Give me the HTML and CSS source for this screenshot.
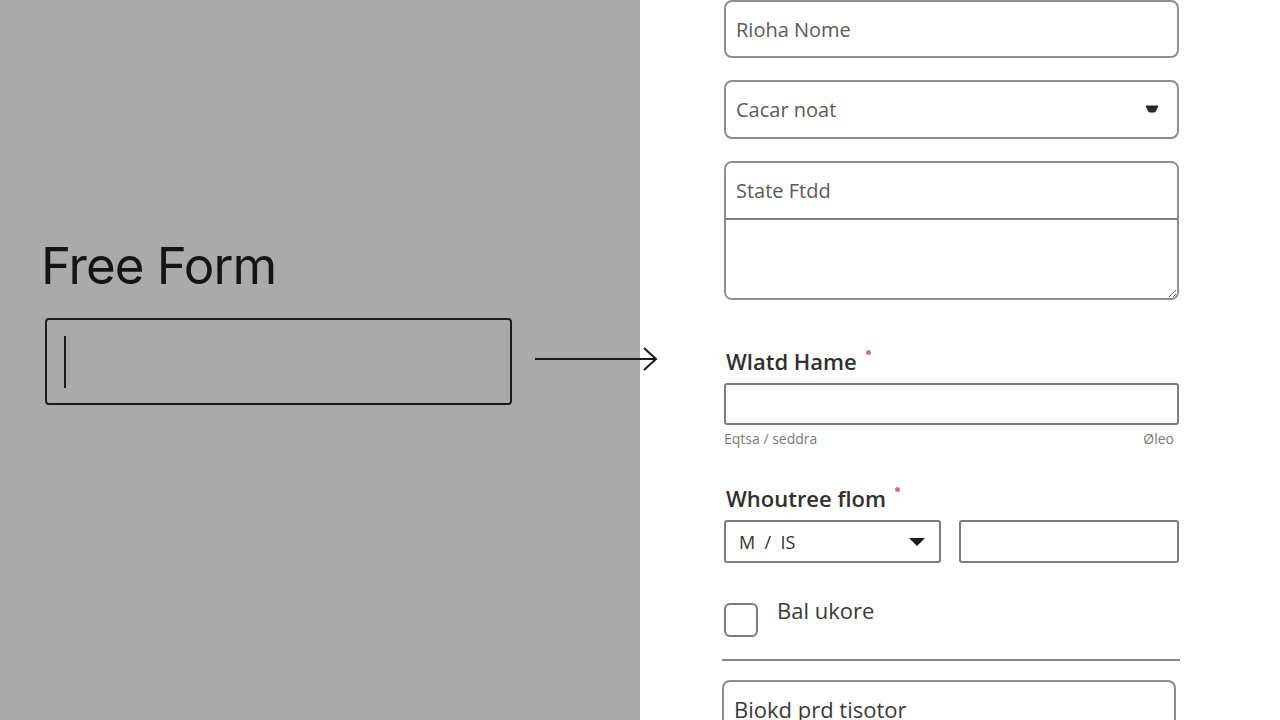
FILE: index.html
```html
<html>
<head>
  <title>Free Form</title>
  <link rel="stylesheet" href="styles.css">
</head>
<body>
  <div class="page">

    <!-- left: the one big free-form input -->
    <div class="side">
      <h1 class="side-title">Free Form</h1>
      <div class="side-row">
        <div class="big-input"><span class="caret"></span></div>
        <svg class="arrow" width="124" height="30" viewBox="0 0 124 30">
          <path d="M0 15 H121 M109 4 L121 15 L109 26" fill="none" stroke="#1a1a1a" stroke-width="2"/>
        </svg>
      </div>
    </div>

    <!-- right: the structured form it turns into -->
    <div class="main">
      <div class="form">
        <input class="field" type="text" placeholder="Rioha Nome">

        <div class="field select">
          <span class="ph">Cacar noat</span>
          <svg width="14" height="9" viewBox="0 0 14 9"><path d="M1 1 H13 L10 7 H4 Z" fill="#2a2a2a" stroke="#2a2a2a" stroke-linejoin="round"/></svg>
        </div>

        <div class="area-box">
          <input class="area-head" type="text" placeholder="State Ftdd">
          <textarea class="area-body"></textarea>
        </div>

        <label class="lbl lbl-first">Wlatd Hame<span class="req"></span></label>
        <input class="field small" type="text">
        <div class="hint">
          <span>Eqtsa / seddra</span>
          <span>Øleo</span>
        </div>

        <label class="lbl lbl-second">Whoutree flom<span class="req"></span></label>
        <div class="pair">
          <div class="field small select date">
            <span class="ph dark">M &nbsp;/ &nbsp;IS</span>
            <svg width="18" height="10" viewBox="0 0 18 10"><path d="M1 1 H17 L9 9 Z" fill="#1a1a1a"/></svg>
          </div>
          <input class="field small" type="text">
        </div>

        <div class="check-row">
          <span class="check"></span>
          <span class="check-text">Bal ukore</span>
        </div>

        <hr class="rule">

        <input class="field last" type="text" placeholder="Biokd prd tisotor">
      </div>
    </div>

  </div>
</body>
</html>
```

FILE: styles.css
```css
body {
  margin: 0;
  background: white;
  font-family: "Open Sans", "Noto Sans", sans-serif;
}

.page {
  display: grid;
  grid-template-columns: 640px 1fr;
  height: 720px;
  overflow: hidden;
}

/* ---- left panel ---- */

.side {
  background: #aaaaaa;
  padding: 235px 0 0 41px;
  position: relative;
  z-index: 1;
}

.side-title {
  margin: 0;
  font-family: Inter, "Liberation Sans", sans-serif;
  font-weight: 400;
  font-size: 51px;
  line-height: 62px;
  letter-spacing: -1px;
  color: #141414;
}

.side-row {
  display: flex;
  align-items: center;
  margin-top: 21px;
  margin-left: 4px;
}

.big-input {
  width: 467px;
  height: 87px;
  flex-shrink: 0;
  box-sizing: border-box;
  border: 2px solid #1c1c1c;
  border-radius: 4px;
  display: flex;
  align-items: center;
  padding-left: 17px;
}

.caret {
  width: 2px;
  height: 52px;
  background: #1c1c1c;
}

.arrow {
  margin-left: 23px;
  margin-top: -5px;
  flex-shrink: 0;
  overflow: visible;
}

/* ---- right panel ---- */

.main {
  padding-left: 84px;
}

.form {
  width: 455px;
  display: flex;
  flex-direction: column;
}

.field {
  box-sizing: border-box;
  height: 58px;
  border: 2px solid #8d8d8d;
  border-radius: 8px;
  padding: 0 10px;
  font-family: inherit;
  font-size: 20px;
  color: #555;
  background: white;
  outline: none;
}

.field::placeholder,
.area-head::placeholder {
  color: #5a5a5a;
}

.select {
  height: 59px;
  margin-top: 22px;
  display: flex;
  align-items: center;
  justify-content: space-between;
  padding-right: 18px;
}

.ph {
  color: #5a5a5a;
}

.ph.dark {
  color: #333;
  font-size: 18px;
}

.area-box {
  margin-top: 22px;
  height: 139px;
  box-sizing: border-box;
  border: 2px solid #8d8d8d;
  border-radius: 8px;
  display: flex;
  flex-direction: column;
  overflow: hidden;
}

.area-head {
  height: 57px;
  border: none;
  border-bottom: 2px solid #7d7d7d;
  padding: 0 10px;
  font-family: inherit;
  font-size: 20px;
  outline: none;
}

.area-body {
  flex: 1;
  border: none;
  outline: none;
  resize: both;
}

.lbl {
  font-size: 22px;
  font-weight: 600;
  line-height: 26px;
  color: #2f2f2f;
  padding-left: 2px;
}

.lbl-first {
  margin-top: 48px;
}

.lbl-second {
  margin-top: 38px;
}

/* required marker: small pink dot */
.req {
  display: inline-block;
  width: 5px;
  height: 5px;
  border-radius: 50%;
  background: #d4708c;
  margin-left: 9px;
  vertical-align: top;
  margin-top: 2px;
}

.small {
  height: 42px;
  border-radius: 3px;
  border-color: #7c7c7c;
  margin-top: 9px;
}

.hint {
  margin-top: 6px;
  display: flex;
  justify-content: space-between;
  font-size: 14px;
  line-height: 16px;
  color: #7a7a7a;
  padding-right: 5px;
}

.pair {
  display: flex;
  gap: 18px;
  margin-top: 0;
}

.pair .field {
  height: 43px;
}

.pair .date {
  width: 217px;
  flex-shrink: 0;
  padding: 0 13px;
}

.pair input.field {
  flex: 1;
  min-width: 0;
  width: 0;
}

.check-row {
  display: flex;
  align-items: flex-start;
  gap: 19px;
  margin-top: 40px;
}

.check {
  width: 34px;
  height: 34px;
  flex-shrink: 0;
  box-sizing: border-box;
  border: 2px solid #7c7c7c;
  border-radius: 6px;
}

.check-text {
  font-size: 22px;
  font-weight: 500;
  line-height: 16px;
  color: #3a3a3a;
  margin-top: -1px;
}

.rule {
  margin: 22px -1px 0 -2px;
  border: none;
  border-top: 2px solid #8a8a8a;
}

.last {
  margin-top: 19px;
  margin-left: -2px;
  margin-right: 3px;
  font-size: 22px;
  color: #3a3a3a;
}

.last::placeholder {
  color: #3a3a3a;
}
```
